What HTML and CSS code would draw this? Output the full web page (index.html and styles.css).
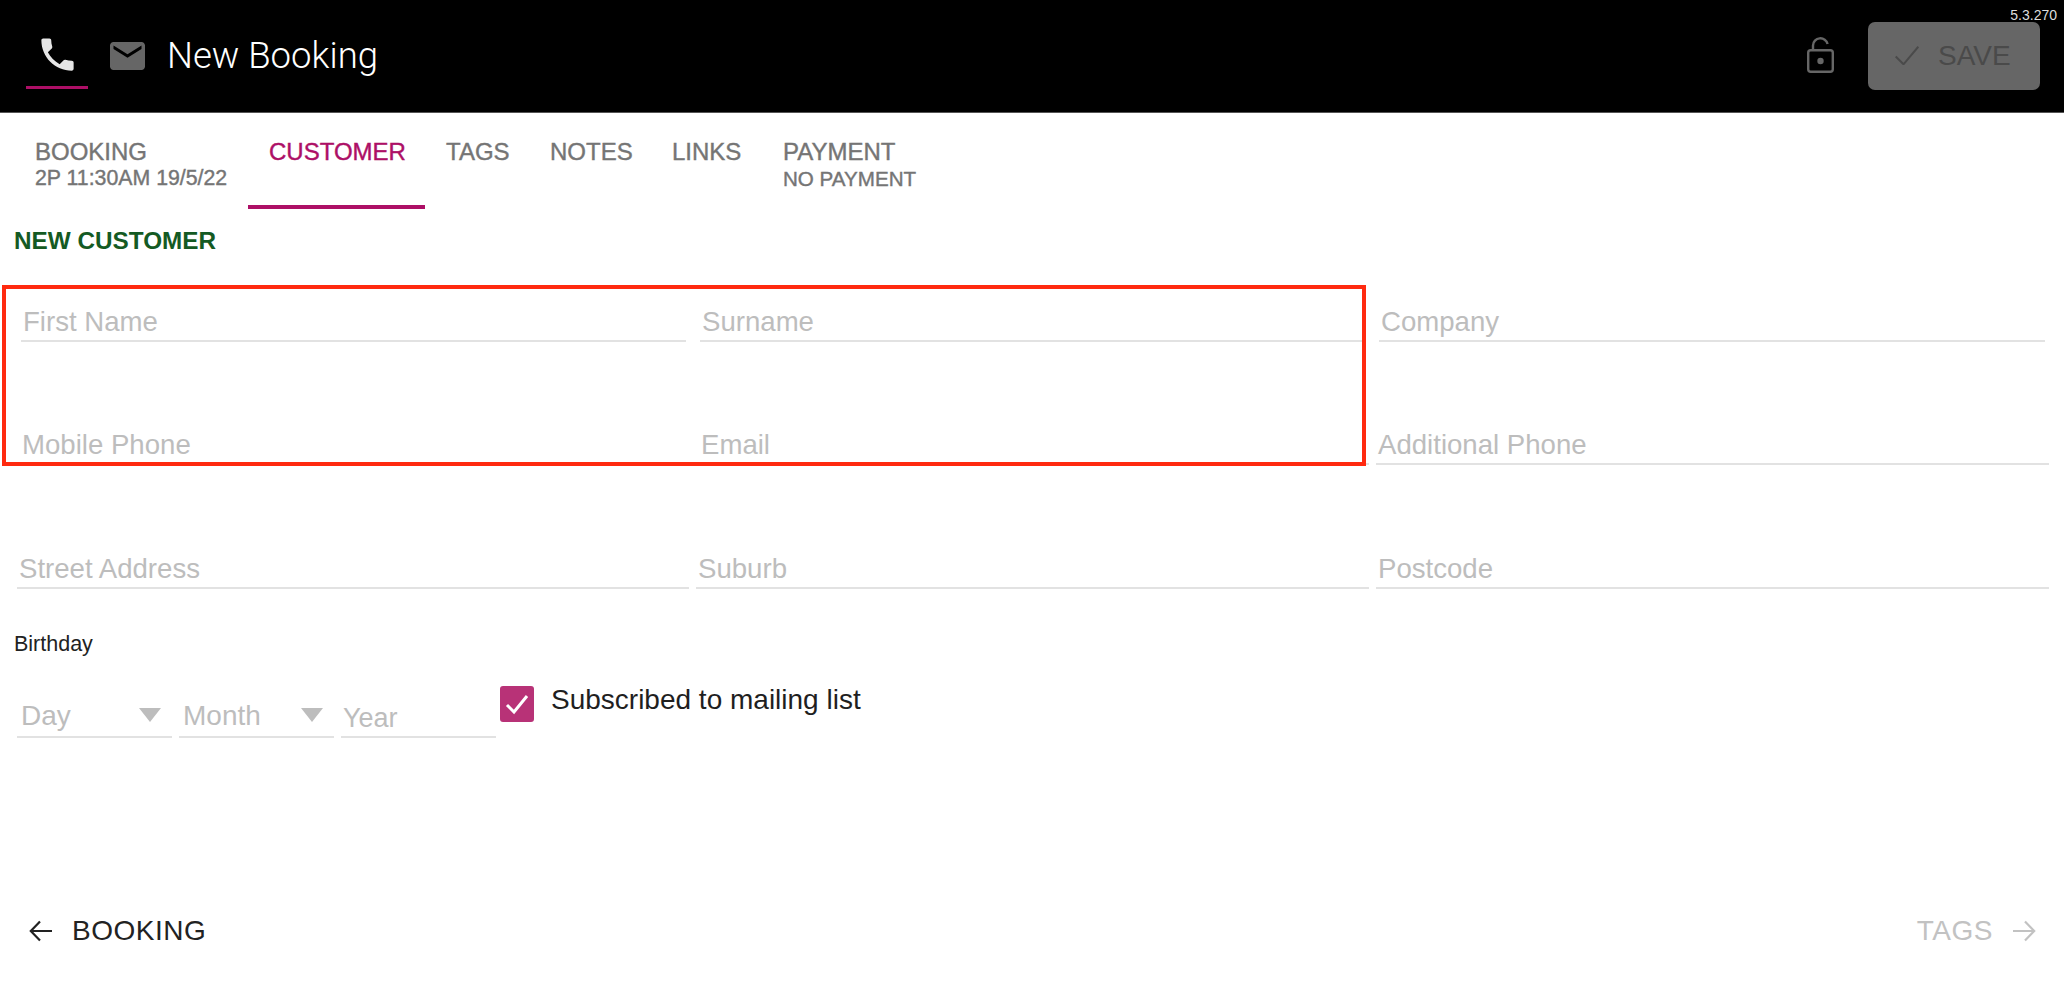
FILE: index.html
```html
<!DOCTYPE html>
<html lang="en">
<head>
<meta charset="utf-8">
<title>New Booking</title>
<link rel="stylesheet" href="styles.css">
</head>
<body>
<div class="app">
  <header class="topbar">
    <div class="mode mode-active">
      <svg class="icon-phone" viewBox="0 0 24 24"><path fill="#e6e6e6" d="M6.62 10.79c1.44 2.83 3.76 5.14 6.59 6.59l2.2-2.2c.27-.27.67-.36 1.02-.24 1.12.37 2.33.57 3.57.57.55 0 1 .45 1 1V20c0 .55-.45 1-1 1-9.39 0-17-7.61-17-17 0-.55.45-1 1-1h3.5c.55 0 1 .45 1 1 0 1.25.2 2.45.57 3.57.11.35.03.74-.25 1.02l-2.2 2.2z"/></svg>
    </div>
    <svg class="icon-mail" viewBox="2 4 20 16"><path fill="#666" d="M20 4H4c-1.1 0-2 .9-2 2v12c0 1.1.9 2 2 2h16c1.100 0 2-.9 2-2V6c0-1.100-.9-2-2-2zm0 4-8 5-8-5V6l8 5 8-5v2z"/></svg>
    <h1 class="title">New Booking</h1>
    <svg class="icon-lock" viewBox="0 0 27 36"><g fill="none" stroke="#666" stroke-width="2.400"><rect x="1.200" y="13.200" width="24.600" height="21.600" rx="2.500"/><path d="M6 13V8.500a7.400 7.400 0 0 1 14.600-1.500"/></g><circle cx="13.500" cy="24" r="3.200" fill="#666"/></svg>
    <button class="save" type="button">
      <svg class="icon-check" viewBox="0 0 24 19"><path fill="none" stroke="#4a4a4a" stroke-width="2" d="M.7 10.500l7.800 7.800L23.300.7"/></svg>
      <span>SAVE</span>
    </button>
    <span class="version">5.3.270</span>
  </header>

  <nav class="tabs">
    <div class="tab tab-booking"><span class="tab-name">BOOKING</span><span class="tab-sub">2P 11:30AM 19/5/22</span></div>
    <div class="tab tab-customer"><span class="tab-name">CUSTOMER</span></div>
    <div class="tab tab-tags"><span class="tab-name">TAGS</span></div>
    <div class="tab tab-notes"><span class="tab-name">NOTES</span></div>
    <div class="tab tab-links"><span class="tab-name">LINKS</span></div>
    <div class="tab tab-payment"><span class="tab-name">PAYMENT</span><span class="tab-sub">NO PAYMENT</span></div>
  </nav>

  <main class="form">
    <h2 class="section">NEW CUSTOMER</h2>
    <div class="row row-1">
      <div class="field">First Name</div>
      <div class="field">Surname</div>
      <div class="field">Company</div>
    </div>
    <div class="row row-2">
      <div class="field">Mobile Phone</div>
      <div class="field">Email</div>
      <div class="field">Additional Phone</div>
    </div>
    <div class="row row-3">
      <div class="field">Street Address</div>
      <div class="field">Suburb</div>
      <div class="field">Postcode</div>
    </div>
    <div class="birthday-label">Birthday</div>
    <div class="birthday">
      <div class="select">Day<span class="caret"></span></div>
      <div class="select">Month<span class="caret"></span></div>
      <div class="select select-year">Year</div>
      <div class="subscribe">
        <span class="checkbox"><svg viewBox="0 0 34 36"><path fill="none" stroke="#fff" stroke-width="3" d="M7 19l7 7L27 10"/></svg></span>
        <span class="subscribe-text">Subscribed to mailing list</span>
      </div>
    </div>
    <div class="highlight"></div>
  </main>

  <footer class="footer">
    <div class="nav-back">
      <svg class="arrow" viewBox="0 0 24 24"><path fill="none" stroke="#222" stroke-width="2.200" d="M23 12H2M11 2.500 1.800 12l9.200 9.500"/></svg>
      <span>BOOKING</span>
    </div>
    <div class="nav-next">
      <span>TAGS</span>
      <svg class="arrow" viewBox="0 0 24 24"><path fill="none" stroke="#c2c2c2" stroke-width="2.200" d="M1 12h21M13 2.500l9.200 9.500-9.200 9.500"/></svg>
    </div>
  </footer>
</div>
</body>
</html>
```
FILE: styles.css
```css
* { box-sizing: border-box; }
html, body { margin: 0; height: 100%; background: #fff; }
body { font-family: "Liberation Sans", Arial, sans-serif; overflow: hidden; }
.app { width: 2064px; height: 982px; display: flex; flex-direction: column; }

.topbar { height: 113px; flex: none; background: #000; border-bottom: 1px solid #555; display: flex; align-items: center; position: relative; padding: 0 24px 0 26px; }
.mode { width: 62px; height: 89px; display: flex; justify-content: center; align-items: center; align-self: flex-start; }
.mode-active { border-bottom: 3px solid #ad0f66; padding-top: 23px; }
.icon-phone { width: 43px; height: 43px; }
.icon-mail { width: 35px; height: 28px; margin-left: 22px; margin-top: -1px; }
.title { margin: -1px 0 0 22px; font-family: Roboto, sans-serif; font-weight: 300; font-size: 36.5px; color: #fff; flex: 1; }
.icon-lock { width: 27px; height: 36px; margin-right: 34px; margin-top: -2px; }
.save { width: 172px; height: 68px; margin-top: -1px; background: #666; border: 0; border-radius: 7px; display: flex; align-items: center; gap: 19px; padding: 0 0 0 27px; color: #4a4a4a; font-family: inherit; font-size: 28px; }
.icon-check { width: 24px; height: 19px; }
.version { position: absolute; top: 7px; right: 7px; font-size: 14px; color: #ddd; }

.tabs { display: flex; height: 96px; flex: none; }
.tab { display: flex; flex-direction: column; color: #757575; padding: 26px 0 0; -webkit-text-stroke: 0.4px currentColor; }
.tab-name { font-size: 24px; line-height: 26px; }
.tab-sub { font-size: 20.6px; line-height: 27px; }
.tab-booking { margin-left: 35px; width: 213px; }
.tab-booking .tab-sub { font-size: 21.3px; }
.tab-customer { width: 177px; padding-left: 21px; color: #ad0f66; border-bottom: 4px solid #ad0f66; }
.tab-tags { margin-left: 21px; width: 104px; }
.tab-notes { width: 122px; }
.tab-links { width: 111px; }

.form { position: relative; flex: 1; }
.section { margin: 0; padding: 18px 0 0 14px; height: 78px; font-size: 24.3px; line-height: 27px; font-weight: 700; color: #145a23; }
.row { display: grid; height: 124px; font-size: 27.6px; color: #bdbdbd; }
.row-1 { grid-template-columns: 665px 665px 666px; column-gap: 14px; padding-left: 21px; height: 123px; }
.row-2, .row-3 { grid-template-columns: 672px 673px 673px; column-gap: 7px; padding-left: 17px; }
.field { height: 55px; padding: 20px 0 0 2px; line-height: 30px; border-bottom: 2px solid #e2e2e2; }
.row-1 .field:nth-child(3) { padding-left: 2px; }
.row-2 .field:nth-child(-n+2) { padding-left: 5px; }
.birthday-label { font-size: 21.5px; color: #222; margin: -26px 0 0 14px; height: 55px; line-height: 24px; }
.birthday { display: flex; padding-left: 17px; align-items: flex-start; font-size: 28px; color: #bdbdbd; }
.select { position: relative; width: 155px; height: 51px; margin-right: 7px; padding: 14px 0 0 4px; line-height: 30px; border-bottom: 2px solid #e2e2e2; }
.select-year { padding: 16px 0 0 2px; margin-right: 4px; font-size: 27px; }
.caret { position: absolute; right: 11px; top: 21px; border-left: 11px solid transparent; border-right: 11px solid transparent; border-top: 14px solid #bdbdbd; }
.subscribe { display: flex; gap: 17px; color: #1f1f1f; line-height: 30px; margin-top: -1px; align-items: flex-start; }
.subscribe-text { margin-top: -1px; }
.checkbox { width: 34px; height: 36px; border-radius: 3px; background: #b83277; display: block; }
.checkbox svg { display: block; width: 34px; height: 36px; }

.highlight { position: absolute; left: 2px; top: 76px; width: 1364px; height: 181px; border: 4px solid #ff2a10; pointer-events: none; }

.footer { height: 67px; flex: none; display: flex; justify-content: space-between; align-items: flex-start; padding: 0 28px 0 29px; font-size: 28px; letter-spacing: 0.5px; }
.nav-back { display: flex; align-items: center; gap: 19px; color: #222; }
.nav-next { display: flex; align-items: center; gap: 19px; color: #c2c2c2; }
.arrow { width: 24px; height: 24px; }
```
